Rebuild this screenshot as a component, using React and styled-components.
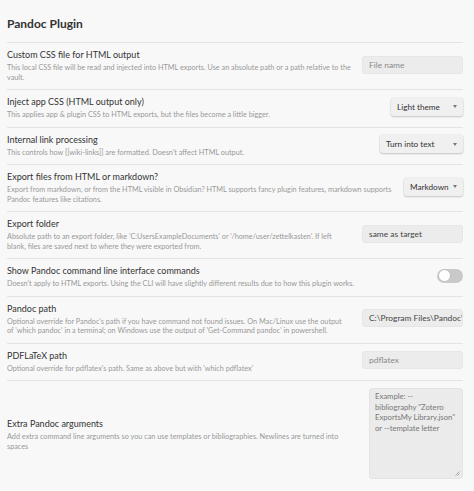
import React from 'react';
import styled, { createGlobalStyle } from 'styled-components';

const GlobalStyle = createGlobalStyle`
  html, body {
    margin: 0;
    padding: 0;
    background: #f8f8f8;
  }
  body {
    font-family: Lato, 'Open Sans', sans-serif;
    color: #2e2e2e;
  }
`;

const Page = styled.div`
  width: 474px;
  height: 491px;
  box-sizing: border-box;
  padding: 0 11px 0 7px;
  background: #f8f8f8;
  overflow: hidden;
`;

const Title = styled.h2`
  margin: 0;
  padding: 15px 0 10px;
  font-size: 12px;
  line-height: 17px;
  font-weight: 700;
  color: #333;
`;

const Item = styled.div`
  display: flex;
  align-items: center;
  border-top: 1px solid #e3e3e3;
  padding: ${(p) => (p.tall ? '7px 0 9px' : '4px 0 7px')};
`;

const Info = styled.div`
  flex: 1;
  min-width: 0;
  margin-right: ${(p) => p.gap}px;
`;

const Name = styled.div`
  font-size: 9px;
  line-height: 16px;
  color: #333;
`;

const Desc = styled.div`
  font-size: 7.28px;
  line-height: 9.5px;
  color: #999;
`;

const TextBox = styled.div`
  width: 101px;
  height: 18px;
  box-sizing: border-box;
  padding: 0 6px;
  border: 1px solid #e6e6e6;
  border-radius: 3px;
  background: #ececec;
  font-size: 8.4px;
  line-height: 16px;
  white-space: nowrap;
  overflow: hidden;
  color: ${(p) => (p.placeholder ? '#8a8a8a' : '#444')};
  flex-shrink: 0;
`;

const Select = styled.div`
  width: ${(p) => p.width}px;
  height: 18px;
  box-sizing: border-box;
  display: flex;
  align-items: center;
  justify-content: space-between;
  padding: 0 6px 0 6px;
  border-radius: 3px;
  background: #f0f0f0;
  box-shadow: 0 1px 2px rgba(0, 0, 0, 0.18), 0 0 0 1px rgba(0, 0, 0, 0.03);
  font-size: 8.2px;
  color: #333;
  white-space: nowrap;
  flex-shrink: 0;
`;

const Caret = styled.span`
  width: 0;
  height: 0;
  margin-left: 4px;
  border-left: 2.5px solid transparent;
  border-right: 2.5px solid transparent;
  border-top: 3px solid #777;
`;

const Toggle = styled.div`
  width: 26px;
  height: 14px;
  box-sizing: border-box;
  padding: 1.5px;
  border-radius: 7px;
  background: #c9c9c9;
  display: flex;
  align-items: center;
  flex-shrink: 0;
`;

const Knob = styled.span`
  width: 11px;
  height: 11px;
  border-radius: 50%;
  background: #fff;
  box-shadow: 0 0 1px rgba(0, 0, 0, 0.2);
`;

const TextArea = styled.div`
  position: relative;
  width: 94px;
  height: 91px;
  box-sizing: border-box;
  padding: 2px 5px;
  border: 1px solid #e3e3e3;
  border-radius: 3px;
  background: #ebebeb;
  font-size: 7.7px;
  line-height: 10.5px;
  color: #777;
  flex-shrink: 0;
`;

const Grip = styled.svg`
  position: absolute;
  right: 2px;
  bottom: 2px;
`;

const Setting = ({ name, desc, children, tall, gap = 8 }) => (
  <Item tall={tall}>
    <Info gap={gap}>
      <Name>{name}</Name>
      <Desc>{desc}</Desc>
    </Info>
    {children}
  </Item>
);

const App = () => (
  <Page>
    <GlobalStyle />
    <Title>Pandoc Plugin</Title>
    <Setting
      name="Custom CSS file for HTML output"
      desc="This local CSS file will be read and injected into HTML exports. Use an absolute path or a path relative to the vault."
    >
      <TextBox placeholder>File name</TextBox>
    </Setting>
    <Setting
      name="Inject app CSS (HTML output only)"
      desc="This applies app & plugin CSS to HTML exports, but the files become a little bigger."
    >
      <Select width={72}>
        Light theme <Caret />
      </Select>
    </Setting>
    <Setting
      name="Internal link processing"
      desc="This controls how [[wiki-links]] are formatted. Doesn't affect HTML output."
    >
      <Select width={83}>
        Turn into text <Caret />
      </Select>
    </Setting>
    <Setting
      name="Export files from HTML or markdown?"
      desc="Export from markdown, or from the HTML visible in Obsidian? HTML supports fancy plugin features, markdown supports Pandoc features like citations."
    >
      <Select width={59}>
        Markdown <Caret />
      </Select>
    </Setting>
    <Setting
      gap={14}
      name="Export folder"
      desc="Absolute path to an export folder, like 'C:UsersExampleDocuments' or '/home/user/zettelkasten'. If left blank, files are saved next to where they were exported from."
    >
      <TextBox>same as target</TextBox>
    </Setting>
    <Setting
      name="Show Pandoc command line interface commands"
      desc="Doesn't apply to HTML exports. Using the CLI will have slightly different results due to how this plugin works."
    >
      <Toggle>
        <Knob />
      </Toggle>
    </Setting>
    <Setting
      gap={14}
      name="Pandoc path"
      desc="Optional override for Pandoc's path if you have command not found issues. On Mac/Linux use the output of 'which pandoc' in a terminal; on Windows use the output of 'Get-Command pandoc' in powershell."
    >
      <TextBox>C:\Program Files\Pandoc\</TextBox>
    </Setting>
    <Setting
      name="PDFLaTeX path"
      desc="Optional override for pdflatex's path. Same as above but with 'which pdflatex'"
    >
      <TextBox placeholder>pdflatex</TextBox>
    </Setting>
    <Setting
      tall
      gap={18}
      name="Extra Pandoc arguments"
      desc="Add extra command line arguments so you can use templates or bibliographies. Newlines are turned into spaces"
    >
      <TextArea>
        Example: --
        <br />
        bibliography "Zotero ExportsMy Library.json" or --template letter
        <Grip width="5" height="5" viewBox="0 0 5 5">
          <path d="M4.5 0.5 L0.5 4.5 M4.5 2.5 L2.5 4.5" stroke="#888" strokeWidth="0.7" />
        </Grip>
      </TextArea>
    </Setting>
  </Page>
);

export default App;
